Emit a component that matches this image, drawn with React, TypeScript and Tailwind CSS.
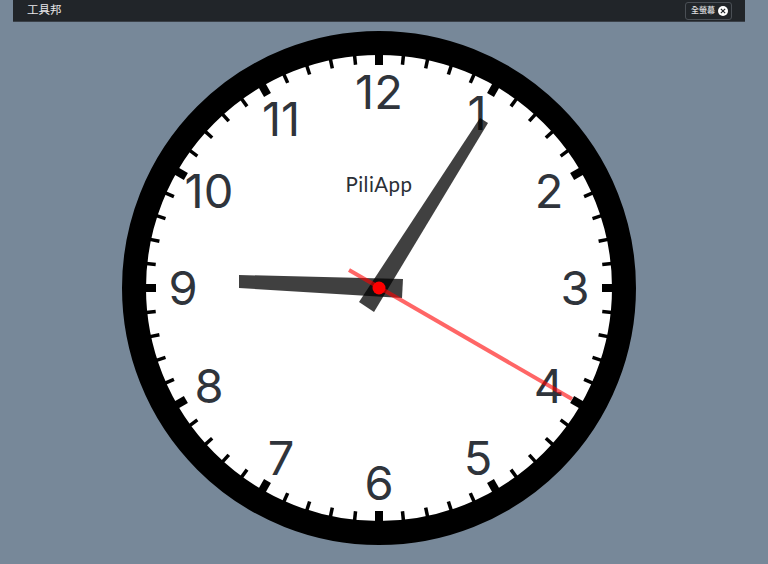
import React from 'react';

const NUMBERS = [
  { label: '12', x: 379, y: 91 },
  { label: '1', x: 477, y: 112 },
  { label: '2', x: 549, y: 190 },
  { label: '3', x: 575, y: 287 },
  { label: '4', x: 549, y: 385 },
  { label: '5', x: 478, y: 457 },
  { label: '6', x: 379, y: 482 },
  { label: '7', x: 281, y: 457 },
  { label: '8', x: 209, y: 385 },
  { label: '9', x: 183, y: 287 },
  { label: '10', x: 209, y: 190 },
  { label: '11', x: 281, y: 118 },
];

// svg is offset by the header height + gap, coordinates below are in page pixels
const CX = 379;
const CY = 288;
const TOP = 31;

const Clock: React.FC = () => {
  const ticks = Array.from({ length: 60 }, (_, i) => i);

  return (
    <svg width="514" height="514" viewBox={`122 ${TOP} 514 514`} className="mx-auto mt-[9px] block">
      <circle cx={CX} cy={CY} r="245" fill="#fff" stroke="#000" strokeWidth="24" />

      {ticks.map((i) => {
        const hour = i % 5 === 0;
        return (
          <rect
            key={i}
            x={CX - (hour ? 4 : 1.75)}
            y={CY - 234}
            width={hour ? 8 : 3.5}
            height={hour ? 11 : 9.5}
            fill="#000"
            transform={`rotate(${i * 6} ${CX} ${CY})`}
          />
        );
      })}

      {NUMBERS.map((n) => (
        <text
          key={n.label}
          x={n.x}
          y={n.y}
          textAnchor="middle"
          dominantBaseline="central"
          fill="#2f343b"
          className="font-['Inter',sans-serif] text-[47px] font-normal"
        >
          {n.label}
        </text>
      ))}

      <text
        x={379}
        y={184}
        textAnchor="middle"
        dominantBaseline="central"
        fill="#2b2f36"
        className="font-['Lato',sans-serif] text-[20.5px] tracking-[0.5px]"
      >
        PiliApp
      </text>

      {/* hour hand */}
      <polygon points="239,275 403,279 402,298 239,288" fill="#000" fillOpacity="0.75" />
      {/* minute hand */}
      <polygon points="488,123 480,118 359,302 374,312" fill="#000" fillOpacity="0.75" />
      {/* second hand */}
      <line x1="349" y1="270" x2="572" y2="399" stroke="#ff0000" strokeOpacity="0.6" strokeWidth="4" />
      <circle cx={CX} cy={CY} r="6.5" fill="#ff0000" />
    </svg>
  );
};

export default function App() {
  return (
    <div className="h-[564px] overflow-hidden bg-[#778899] font-['Liberation_Sans','Noto_Sans_CJK_TC',sans-serif]">
      <div className="w-[758px]">
        <div className="mx-[13px] flex h-[22px] items-center justify-between border-b border-[#3a4048] bg-[#212529] pl-[14px] pr-[13px]">
          <span className="text-[11.5px] text-white/90">工具邦</span>
          <button className="flex h-[18px] w-[47px] items-center gap-[3px] rounded-[3px] border border-[#4a4f55] pl-[5px] text-[8px] font-medium text-white/85">
            全螢幕
            <span className="flex h-[10px] w-[10px] items-center justify-center rounded-full bg-white">
              <svg width="6" height="6" viewBox="0 0 7 7" stroke="#212529" strokeWidth="1.4">
                <path d="M1 1l5 5M6 1l-5 5" />
              </svg>
            </span>
          </button>
        </div>
        <Clock />
      </div>
    </div>
  );
}
